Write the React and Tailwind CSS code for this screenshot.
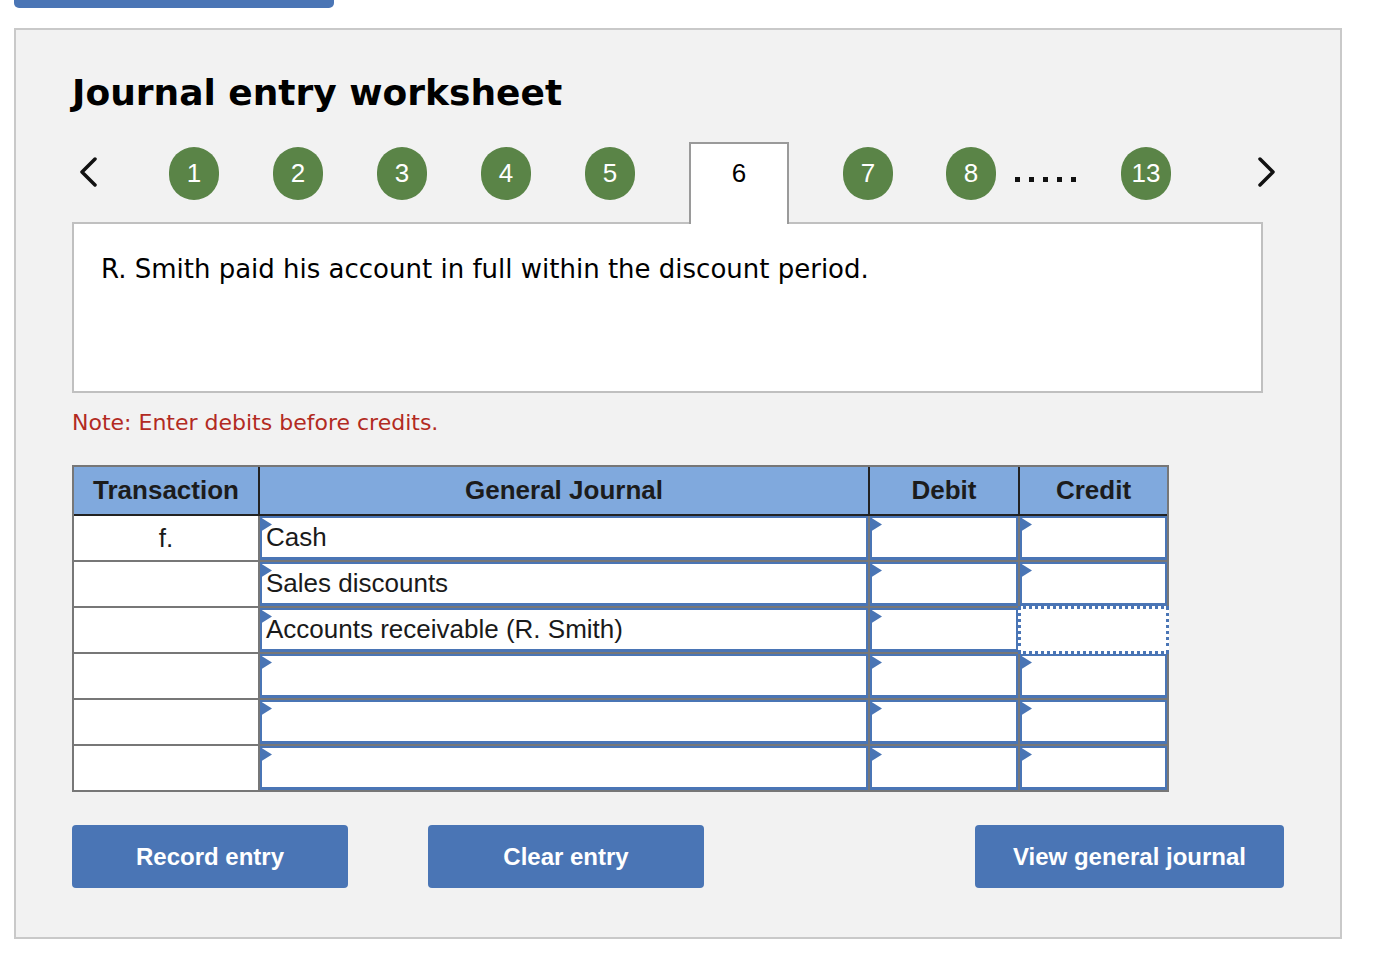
import React from 'react';

const dejavu = { fontFamily: '"DejaVu Sans", Verdana, sans-serif' };
const arial = { fontFamily: '"Liberation Sans", Arial, sans-serif' };

function Chevron({ dir }) {
  return (
    <svg width="20" height="30" viewBox="0 0 20 30" className="mt-[15px] shrink-0">
      {dir === 'left' ? (
        <polyline points="17,2 4,15 17,28" fill="none" stroke="#111" strokeWidth="3.5" strokeLinecap="round" strokeLinejoin="round" />
      ) : (
        <polyline points="3,2 16,15 3,28" fill="none" stroke="#111" strokeWidth="3.5" strokeLinecap="round" strokeLinejoin="round" />
      )}
    </svg>
  );
}

function Step({ n, className }) {
  return (
    <div className={`mt-[5px] flex h-[53px] w-[50px] shrink-0 items-center justify-center rounded-full bg-[#5a8447] text-[26px] text-white ${className}`} style={arial}>
      {n}
    </div>
  );
}

function Marker() {
  return (
    <svg width="12" height="15" viewBox="0 0 12 15" className="absolute left-[-2px] top-[-1px] z-10 block h-[15px] w-[12px] max-w-none">
      <polygon points="0,0 12,7.5 0,15" fill="#4a75b5" />
    </svg>
  );
}

function InputCell({ text, focused }) {
  if (focused) {
    return (
      <div className="relative z-20 h-[44px] bg-white">
        <div className="absolute -inset-[2px] border-[3px] border-dotted border-[#4a75b5] bg-white" />
      </div>
    );
  }
  return (
    <div className="relative flex h-[44px] items-center border-2 border-b-[3px] border-[#4a75b5] bg-white pl-[4px] text-[26px] text-[#1a1a1a]" style={arial}>
      <Marker />
      {text}
    </div>
  );
}

const rows = [
  { t: 'f.', gj: 'Cash' },
  { t: '', gj: 'Sales discounts' },
  { t: '', gj: 'Accounts receivable (R. Smith)', focus: true },
  { t: '', gj: '' },
  { t: '', gj: '' },
  { t: '', gj: '' },
];

export default function App() {
  return (
    <div className="min-h-[976px] w-[1392px] bg-white pl-[14px]">
      <div className="h-[8px] w-[320px] rounded-b-[5px] bg-[#4a75b5]" />

      <div className="mt-[20px] h-[911px] w-[1328px] border-2 border-[#c9c9c9] bg-[#f2f2f2] pl-[56px]">
        <h1 className="mt-[45px] text-[36px] font-bold leading-[36px] text-black" style={dejavu}>
          Journal entry worksheet
        </h1>

        <div className="relative z-10 mt-[31px] flex h-[82px] items-start">
          <div className="ml-[6px]"><Chevron dir="left" /></div>
          <Step n="1" className="ml-[71px]" />
          <Step n="2" className="ml-[54px]" />
          <Step n="3" className="ml-[54px]" />
          <Step n="4" className="ml-[54px]" />
          <Step n="5" className="ml-[54px]" />
          <div className="ml-[54px] h-[82px] w-[100px] shrink-0 border-2 border-b-0 border-[#9a9a9a] bg-white pt-[14px] text-center text-[26px] leading-[30px] text-black" style={arial}>
            6
          </div>
          <Step n="7" className="ml-[54px]" />
          <Step n="8" className="ml-[53px]" />
          <div className="ml-[19px] mt-[35px] flex gap-[9px]">
            {[0, 1, 2, 3, 4].map((i) => (
              <span key={i} className="block h-[5px] w-[5px] bg-[#111]" />
            ))}
          </div>
          <Step n="13" className="ml-[45px]" />
          <div className="ml-[86px]"><Chevron dir="right" /></div>
        </div>

        <div className="-mt-[2px] h-[171px] w-[1191px] border-2 border-[#c0c0c0] bg-white pl-[27px] pt-[30px] text-[26px] leading-[30px] text-black" style={dejavu}>
          R. Smith paid his account in full within the discount period.
        </div>

        <p className="mt-[17px] text-[22px] leading-[26px] text-[#b22a22]" style={dejavu}>
          Note: Enter debits before credits.
        </p>

        <div className="mt-[29px] w-[1097px] bg-[#777] p-[2px]" style={arial}>
          <div className="grid grid-cols-[184px_608px_148px_147px] gap-x-[2px] bg-[#222] pb-[2px]">
            {['Transaction', 'General Journal', 'Debit', 'Credit'].map((h) => (
              <div key={h} className="flex h-[47px] items-center justify-center bg-[#80a9dd] text-[26px] font-bold text-[#1c1c1c]">
                {h}
              </div>
            ))}
          </div>
          <div className="grid grid-cols-[184px_608px_148px_147px] gap-[2px]">
            {rows.map((r, i) => (
              <React.Fragment key={i}>
                <div className="flex h-[44px] items-center justify-center bg-white text-[26px] text-[#1a1a1a]">{r.t}</div>
                <InputCell text={r.gj} />
                <InputCell text="" />
                <InputCell text="" focused={r.focus} />
              </React.Fragment>
            ))}
          </div>
        </div>

        <div className="mt-[33px] flex" style={arial}>
          <button className="h-[63px] w-[276px] rounded-[4px] bg-[#4a75b5] text-[24px] font-bold text-white">
            Record entry
          </button>
          <button className="ml-[80px] h-[63px] w-[276px] rounded-[4px] bg-[#4a75b5] text-[24px] font-bold text-white">
            Clear entry
          </button>
          <button className="ml-[271px] h-[63px] w-[309px] rounded-[4px] bg-[#4a75b5] text-[24px] font-bold text-white">
            View general journal
          </button>
        </div>
      </div>
    </div>
  );
}
